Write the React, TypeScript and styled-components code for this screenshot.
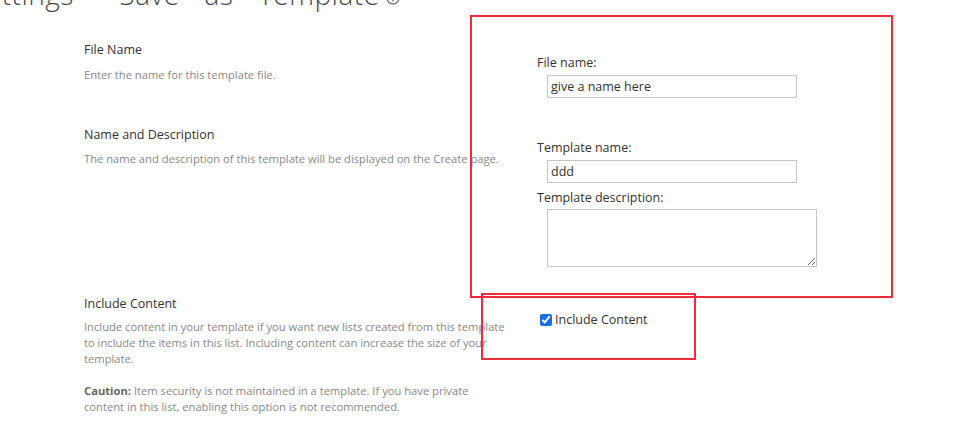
import React from 'react';
import styled, { createGlobalStyle } from 'styled-components';

const GlobalStyle = createGlobalStyle`
  body {
    margin: 0;
    background: #fff;
    font-family: "Open Sans", "Noto Sans", sans-serif;
  }
`;

const Page = styled.div`
  position: relative;
  width: 975px;
  height: 443px;
  overflow: hidden;
  background: #fff;
`;

const Title = styled.h1`
  margin: -23px 0 0 -30px;
  font-size: 28px;
  font-weight: 300;
  line-height: 34px;
  letter-spacing: 0.5px;
  word-spacing: 17px;
  color: #4a4a4a;
  white-space: nowrap;
  display: flex;
  align-items: center;
`;

const Separator = styled.span`
  margin: 0 24px 0 12px;
`;

const InfoIcon = () => (
  <svg width="14" height="14" viewBox="0 0 14 14" style={{ marginTop: 8, marginLeft: 6 }}>
    <circle cx="7" cy="7" r="6" fill="none" stroke="#777" strokeWidth="1.4" />
    <rect x="6.3" y="6" width="1.4" height="4.5" fill="#777" />
    <circle cx="7" cy="4.2" r="0.9" fill="#777" />
  </svg>
);

const Section = styled.section<{ $top: number }>`
  display: grid;
  grid-template-columns: 453px 420px;
  padding-left: 84px;
  margin-top: ${(p) => p.$top}px;
`;

const Info = styled.div`
  display: flex;
  flex-direction: column;
`;

const Heading = styled.h3`
  margin: 0;
  font-size: 12.5px;
  font-weight: 400;
  line-height: 18px;
  color: #333;
`;

const Desc = styled.p<{ $gap?: number }>`
  margin: ${(p) => p.$gap ?? 7}px 0 0;
  font-size: 11.2px;
  line-height: 16px;
  color: #888;
  white-space: nowrap;

  b {
    font-weight: 700;
    color: #666;
  }
`;

const Fields = styled.div<{ $top: number }>`
  display: flex;
  flex-direction: column;
  align-items: flex-start;
  padding-top: ${(p) => p.$top}px;
`;

const Label = styled.label<{ $gap?: number }>`
  margin-top: ${(p) => p.$gap ?? 0}px;
  font-size: 12.5px;
  line-height: 18px;
  color: #333;
`;

const TextInput = styled.input`
  box-sizing: border-box;
  margin: 3px 0 0 10px;
  width: 250px;
  height: 23px;
  padding: 0 3px;
  border: 1px solid #c6c6c6;
  font-family: inherit;
  font-size: 12.5px;
  color: #333;
  outline: none;
`;

const TextArea = styled.textarea`
  box-sizing: border-box;
  margin: 2px 0 0 10px;
  width: 270px;
  height: 58px;
  border: 1px solid #c6c6c6;
  font-family: inherit;
  font-size: 12.5px;
  outline: none;
`;

const CheckRow = styled.label`
  display: flex;
  align-items: center;
  gap: 3px;
  margin-left: 3px;
  font-size: 12.5px;
  line-height: 18px;
  color: #333;

  input {
    margin: 0;
    width: 12px;
    height: 12px;
    accent-color: #1a6fe0;
  }
`;

const Highlight = styled.div<{ $x: number; $y: number; $w: number; $h: number }>`
  position: absolute;
  left: ${(p) => p.$x}px;
  top: ${(p) => p.$y}px;
  width: ${(p) => p.$w}px;
  height: ${(p) => p.$h}px;
  box-sizing: border-box;
  border: 2px solid #ee2d38;
  pointer-events: none;
`;

export default function App() {
  return (
    <Page>
      <GlobalStyle />
      <Title>
        Settings
        <Separator>-</Separator>
        Save as Template
        <InfoIcon />
      </Title>

      <Section $top={30}>
        <Info>
          <Heading>File Name</Heading>
          <Desc $gap={8}>Enter the name for this template file.</Desc>
        </Info>
        <Fields $top={13}>
          <Label>File name:</Label>
          <TextInput defaultValue="give a name here" />
        </Fields>
      </Section>

      <Section $top={28}>
        <Info>
          <Heading>Name and Description</Heading>
          <Desc>The name and description of this template will be displayed on the Create page.</Desc>
        </Info>
        <Fields $top={13}>
          <Label>Template name:</Label>
          <TextInput defaultValue="ddd" />
          <Label $gap={6}>Template description:</Label>
          <TextArea />
        </Fields>
      </Section>

      <Section $top={28}>
        <Info>
          <Heading>Include Content</Heading>
          <Desc $gap={6}>
            Include content in your template if you want new lists created from this template
            <br />
            to include the items in this list. Including content can increase the size of your
            <br />
            template.
          </Desc>
          <Desc $gap={16}>
            <b>Caution:</b> Item security is not maintained in a template. If you have private
            <br />
            content in this list, enabling this option is not recommended.
          </Desc>
        </Info>
        <Fields $top={16}>
          <CheckRow>
            <input type="checkbox" defaultChecked />
            Include Content
          </CheckRow>
        </Fields>
      </Section>

      <Highlight $x={470} $y={15} $w={423} $h={283} />
      <Highlight $x={481} $y={293} $w={215} $h={67} />
    </Page>
  );
}
